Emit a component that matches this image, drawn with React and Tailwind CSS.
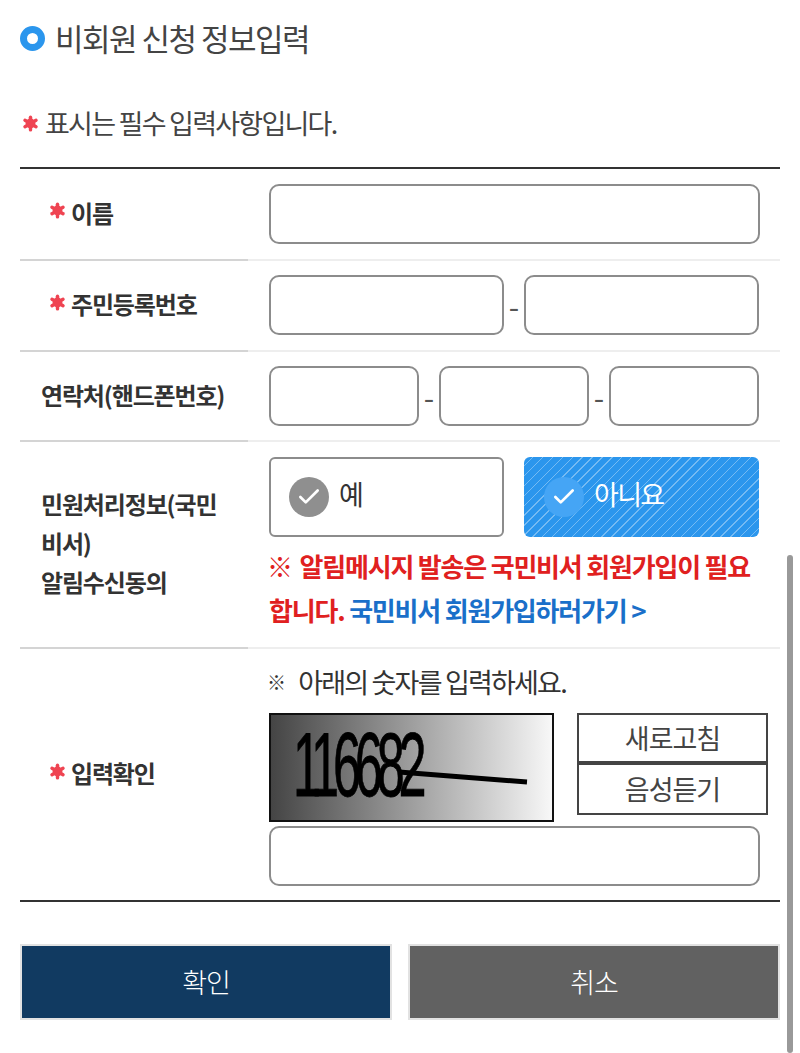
import { Check } from 'lucide-react'

const FONT = 'font-["Noto_Sans_CJK_KR","Noto_Sans",sans-serif]'

function Star({ className = '' }) {
  return (
    <svg viewBox="0 0 16 16" className={`w-[17px] h-[17px] shrink-0 ${className}`}>
      <g stroke="#ef4452" strokeWidth="3.2" strokeLinecap="round">
        <path d="M8 2v12" />
        <path d="M2.8 5l10.4 6" />
        <path d="M13.2 5L2.8 11" />
      </g>
      <circle cx="8" cy="8" r="4.6" fill="#ef4452" />
    </svg>
  )
}

function Row({ height, required, label, children, last }) {
  return (
    <div className={`flex ${height} ${last ? '' : 'border-b-2 border-[#eeeeee]'} relative`}>
      <div className="w-[228px] shrink-0 pl-[21px] pr-[10px] pb-[4px] flex items-center">
        <div className="text-[24px] leading-[39px] font-bold tracking-[-1.15px] text-[#333333]">
          {required && <Star className="inline-block mr-[5px] mb-[10px] ml-[8px]" />}
          {label}
        </div>
      </div>
      <div className="flex-1 min-w-0 pl-[21px] pr-[20px]">{children}</div>
      {!last && <div className="absolute left-0 bottom-[-2px] w-[228px] h-[2px] bg-[#d4d4d4]" />}
    </div>
  )
}

function Field({ className = '' }) {
  return <div className={`h-[60px] rounded-[10px] border-2 border-[#8c8c8c] bg-white ${className}`} />
}

function Dash() {
  return <span className="w-[20px] text-center text-[30px] leading-[30px] text-[#555555]">-</span>
}

export default function App() {
  return (
    <div className={`relative w-[800px] h-[1053px] overflow-hidden bg-white ${FONT}`}>
      <div className="pl-[20px] pr-[20px]">
        <div className="pt-[14px] flex items-center h-[50px]">
          <div className="w-[25px] h-[25px] rounded-full border-[7px] border-[#2b96ed] bg-white mt-[12px]" />
          <h1 className="ml-[10px] mt-[12px] text-[31px] leading-[40px] font-normal tracking-[-1.5px] text-[#444444]">비회원 신청 정보입력</h1>
        </div>
        <div className="mt-[53px] flex items-center h-[40px] pl-[2px]">
          <Star />
          <span className="ml-[6px] text-[27px] leading-[40px] tracking-[-1.75px] text-[#444444]">표시는 필수 입력사항입니다.</span>
        </div>

        <div className="mt-[24px] border-t-2 border-b-2 border-t-[#333333] border-b-[#333333]">
          <Row height="h-[92px]" required label="이름">
            <Field className="mt-[15px]" />
          </Row>
          <Row height="h-[91px]" required label="주민등록번호">
            <div className="flex items-center mt-[14px]">
              <Field className="w-[235px]" />
              <Dash />
              <Field className="w-[235px]" />
            </div>
          </Row>
          <Row height="h-[90px]" label="연락처(핸드폰번호)">
            <div className="flex items-center mt-[14px]">
              <Field className="w-[150px]" />
              <Dash />
              <Field className="w-[150px]" />
              <Dash />
              <Field className="w-[150px]" />
            </div>
          </Row>
          <Row height="h-[207px]" label={<>민원처리정보(국민<br />비서)<br />알림수신동의</>}>
            <div className="flex gap-[20px] mt-[15px]">
              <div className="w-[235px] h-[80px] rounded-[6px] border-2 border-[#8c8c8c] flex items-center pl-[18px]">
                <span className="w-[40px] h-[40px] rounded-full bg-[#8f8f8f] flex items-center justify-center">
                  <Check size={26} color="#ffffff" strokeWidth={2.5} />
                </span>
                <span className="ml-[10px] mb-[6px] text-[27px] text-[#333333]">예</span>
              </div>
              <div className="w-[235px] h-[80px] rounded-[6px] bg-[#2b96ed] bg-[repeating-linear-gradient(135deg,transparent_0,transparent_6px,rgba(255,255,255,0.35)_6px,rgba(255,255,255,0.35)_7px)] flex items-center pl-[20px]">
                <span className="w-[40px] h-[40px] rounded-full bg-[#45a5f5] flex items-center justify-center">
                  <Check size={26} color="#ffffff" strokeWidth={2.5} />
                </span>
                <span className="ml-[10px] mb-[6px] text-[27px] tracking-[-1.7px] text-white">아니요</span>
              </div>
            </div>
            <p className="mt-[7px] w-[492px] text-[26px] leading-[44px] font-bold tracking-[-1.2px] text-[#e02020]">
              <span className="ml-[-2px] mr-[3px]">※</span> 알림메시지 발송은 국민비서 회원가입이 필요합니다. <span className="text-[#1a6fc9]">국민비서 회원가입하러가기 &gt;</span>
            </p>
          </Row>
          <Row height="h-[251px]" required label="입력확인" last>
            <p className="mt-[13px] h-[40px] flex items-center text-[27px] leading-[40px] tracking-[-1.8px] text-[#333333]">
              <span className="ml-[-2px] mr-[14px] text-[19px] font-medium">※</span>아래의 숫자를 입력하세요.
            </p>
            <div className="mt-[11px] flex items-start">
              <svg viewBox="0 0 285 109" className="w-[285px] h-[109px] shrink-0">
                <defs>
                  <linearGradient id="captcha-bg" x1="0" x2="1" y1="0" y2="0">
                    <stop offset="0" stopColor="#444444" />
                    <stop offset="1" stopColor="#f8f8f8" />
                  </linearGradient>
                </defs>
                <rect x="1" y="1" width="283" height="107" fill="url(#captcha-bg)" stroke="#111111" strokeWidth="2" />
                <text transform="translate(24,83) scale(.56,1)" fontSize="90" letterSpacing="-11" fontFamily="Liberation Sans" fill="#000000" stroke="#000000" strokeWidth="0.8">116682</text>
                <path d="M130 59L258 69" stroke="#000000" strokeWidth="5" />
              </svg>
              <div className="ml-[23px] w-[191px] shrink-0 border-2 border-[#444444] text-center text-[27px] tracking-[-1px] text-[#444444]">
                <div className="h-[50px] leading-[46px] border-b-4 border-[#444444]">새로고침</div>
                <div className="h-[48px] leading-[48px]">음성듣기</div>
              </div>
            </div>
            <Field className="mt-[4px]" />
          </Row>
        </div>

        <div className="mt-[42px] flex gap-[16px]">
          <button className="flex-1 h-[76px] border-2 border-[#e2e2e2] bg-[#113a61] text-[27px] font-light tracking-[-1px] text-white">확인</button>
          <button className="flex-1 h-[76px] border-2 border-[#e2e2e2] bg-[#616161] text-[27px] font-light tracking-[-1px] text-white">취소</button>
        </div>
      </div>

      {/* overlay scrollbar */}
      <div className="absolute left-[787px] top-[555px] w-[6px] h-[498px] rounded-full bg-[#999999]" />
    </div>
  )
}
